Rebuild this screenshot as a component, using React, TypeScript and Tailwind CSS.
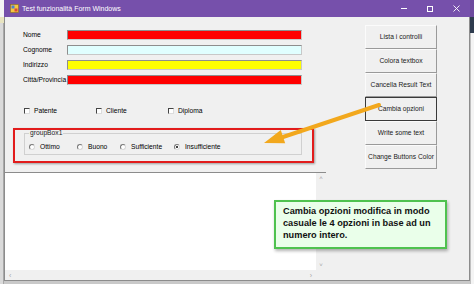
import React from "react";

const FIELDS = [
  { label: "Nome", fill: "bg-[#ff0000]" },
  { label: "Cognome", fill: "bg-[#e0ffff]" },
  { label: "Indirizzo", fill: "bg-[#ffff00]" },
  { label: "Città/Provincia", fill: "bg-[#ff0000]" },
];

const CHECKS = ["Patente", "Cliente", "Diploma"];

const RADIOS = [
  { label: "Ottimo", w: "w-[48px]", on: false },
  { label: "Buono", w: "w-[43px]", on: false },
  { label: "Sufficiente", w: "w-[54px]", on: false },
  { label: "Insufficiente", w: "w-[70px]", on: true },
];

const BUTTONS = [
  "Lista i controlli",
  "Colora textbox",
  "Cancella Result Text",
  "Cambia opzioni",
  "Write some text",
  "Change Buttons Color",
];

function AppIcon() {
  return (
    <svg width="9" height="9" viewBox="0 0 9 9">
      <rect x="0.5" y="0.5" width="8" height="8" fill="#f4c542" stroke="#8a6d1d" strokeWidth="0.6" />
      <rect x="1.5" y="1.5" width="3" height="3" fill="#4a7fd0" />
      <rect x="4.5" y="4.5" width="3" height="3" fill="#d94a3a" />
    </svg>
  );
}

export default function App() {
  return (
    <div className="relative w-[474px] h-[284px] bg-[#c9c9c9] flex overflow-hidden font-['Liberation_Sans',Arial,sans-serif]">
      {/* desktop strip on the left */}
      <div className="w-[4px] h-full bg-[#dadada] flex flex-col">
        <div className="h-[17px] bg-[#f4f4f4]" />
        <div className="h-[6px] bg-[#e8e4c0]" />
        <div className="flex-1 border-r border-[#a8a8a8]" />
      </div>

      {/* ── Window ─────────────────────────────────────────── */}
      <div className="w-[466px] h-[281px] flex flex-col">
        {/* title bar */}
        <div className="h-[17px] bg-[#7650ab] flex items-center pl-[6px] shrink-0">
          <AppIcon />
          <span className="ml-[3px] text-[7px] text-white leading-none">Test funzionalità Form Windows</span>
          <div className="ml-auto flex h-full pr-[1px]">
            <div className="w-[26px] flex items-center justify-center">
              <div className="w-[6px] h-px bg-white" />
            </div>
            <div className="w-[26px] flex items-center justify-center">
              <div className="w-[6px] h-[6px] border border-white" />
            </div>
            <div className="w-[26px] flex items-center justify-center">
              <svg width="7" height="7" viewBox="0 0 7 7">
                <path d="M0.5 0.5 L6.5 6.5 M6.5 0.5 L0.5 6.5" stroke="white" strokeWidth="0.9" />
              </svg>
            </div>
          </div>
        </div>

        {/* body */}
        <div className="flex-1 flex bg-[#f0f0f0] border-l border-r border-b border-[#8c8c8c] text-[6.7px] text-black leading-none">
          {/* left column */}
          <div className="w-[321px] flex flex-col pt-[13px]">
            <div className="flex flex-col gap-[5px] pl-[18px]">
              {FIELDS.map((f) => (
                <div key={f.label} className="flex items-center h-[10px]">
                  <span className="w-[44px] whitespace-nowrap">{f.label}</span>
                  <div className={`w-[235px] h-[10px] border-t border-l border-[#8e8e8e] border-r-[#c8c8c8] border-b-[#c8c8c8] border-r border-b ${f.fill}`} />
                </div>
              ))}
            </div>

            {/* checkboxes */}
            <div className="mt-[22px] h-[8px] flex items-center pl-[19px]">
              {CHECKS.map((c) => (
                <div key={c} className="w-[72px] flex items-center gap-[4px]">
                  <div className="w-[6px] h-[6px] bg-white border-t border-l border-[#444] border-r border-b border-r-[#dcdcdc] border-b-[#dcdcdc]" />
                  <span>{c}</span>
                </div>
              ))}
            </div>

            {/* highlighted group box */}
            <div className="mt-[13px] ml-[8px] w-[301px] h-[35px] border-2 border-[#e21c1c] shadow-[1px_1px_2px_rgba(0,0,0,0.35)]">
              <div className="relative mt-[3px] ml-[9px] w-[278px] h-[22px] border border-[#d0d0d0] flex items-center pl-[4px] pt-[6px]">
                <span className="absolute -top-[4px] left-[4px] bg-[#f0f0f0] px-[1px] text-[#222]">groupBox1</span>
                {RADIOS.map((r) => (
                  <div key={r.label} className={`${r.w} flex items-center gap-[5px]`}>
                    <div className="w-[6px] h-[6px] rounded-full bg-white border border-[#777] border-r-[#d8d8d8] border-b-[#d8d8d8] flex items-center justify-center">
                      {r.on && <div className="w-[2px] h-[2px] rounded-full bg-black" />}
                    </div>
                    <span className="whitespace-nowrap">{r.label}</span>
                  </div>
                ))}
              </div>
            </div>

            {/* result text area */}
            <div className="mt-[9px] h-[108px] flex flex-col bg-white border-t border-[#8c8c8c]">
              <div className="flex-1 flex">
                <div className="flex-1" />
                <div className="w-[10px] bg-[#f0f0f0] flex flex-col items-center justify-between text-[6px] text-[#a0a0a0] py-[2px]">
                  <span>˄</span>
                  <span>˅</span>
                </div>
              </div>
              <div className="h-[10px] flex bg-[#f0f0f0]">
                <div className="flex-1 flex items-center justify-between px-[4px] text-[7px] text-[#a8a8a8]">
                  <span>‹</span>
                  <span>›</span>
                </div>
                <div className="w-[10px] bg-[#f0f0f0]" />
              </div>
            </div>
          </div>

          {/* buttons column */}
          <div className="ml-[39px] pt-[8px] flex flex-col w-[72px]">
            {BUTTONS.map((b) => (
              <div
                key={b}
                className={`h-[24px] flex items-center justify-center whitespace-nowrap text-[#1a1a1a] bg-[#f0f0f0] ${
                  b === "Cambia opzioni"
                    ? "border-[1.5px] border-[#3a3a3a]"
                    : "border border-t-[#fbfbfb] border-l-[#fbfbfb] border-r-[#9a9a9a] border-b-[#9a9a9a]"
                }`}
              >
                {b}
              </div>
            ))}
          </div>
        </div>
      </div>

      {/* desktop strip on the right */}
      <div className="w-[4px] h-full flex flex-col bg-[#f4f4f4]">
        <div className="h-[17px] bg-[#6d4a9e]" />
        <div className="h-[16px] bg-[#2e3b4e]" />
        <div className="flex-1 border-l border-[#c0c0c0]" />
      </div>

      {/* annotation arrow */}
      <svg className="absolute left-0 top-0 pointer-events-none" width="474" height="284">
        <line x1="379" y1="105" x2="283" y2="137" stroke="#f2a81d" strokeWidth="4" strokeLinecap="round" />
        <polygon points="264,143 280.8,130.1 285.2,143.3" fill="#f2a81d" />
      </svg>

      {/* annotation note */}
      <div className="absolute left-[274px] top-[200px] w-[173px] h-[49px] bg-[#eaffea] border-2 border-[#4fc24f] shadow-[1px_2px_3px_rgba(0,0,0,0.3)] pl-[7px] pt-[3px] text-[9.2px] leading-[12px] font-bold text-[#111] whitespace-nowrap">
        Cambia opzioni modifica in modo
        <br />
        casuale le 4 opzioni in base ad un
        <br />
        numero intero.
      </div>
    </div>
  );
}
